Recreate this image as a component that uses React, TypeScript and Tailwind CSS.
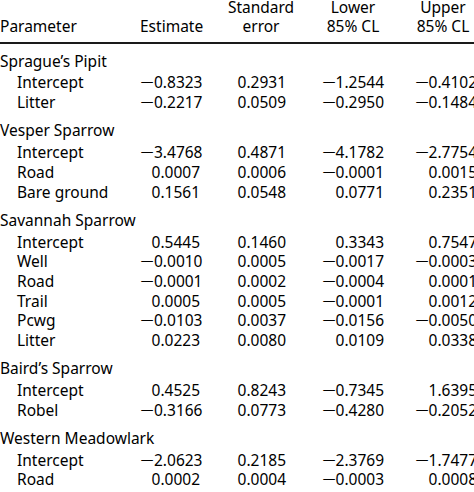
import React from "react";

type Row = [string, string, string, string, string];
type Section = { name: string; rows: Row[] };

const sections: Section[] = [
  {
    name: "Sprague\u2019s Pipit",
    rows: [
      ["Intercept", "-0.8323", "0.2931", "-1.2544", "-0.4102"],
      ["Litter", "-0.2217", "0.0509", "-0.2950", "-0.1484"],
    ],
  },
  {
    name: "Vesper Sparrow",
    rows: [
      ["Intercept", "-3.4768", "0.4871", "-4.1782", "-2.7754"],
      ["Road", "0.0007", "0.0006", "-0.0001", "0.0015"],
      ["Bare ground", "0.1561", "0.0548", "0.0771", "0.2351"],
    ],
  },
  {
    name: "Savannah Sparrow",
    rows: [
      ["Intercept", "0.5445", "0.1460", "0.3343", "0.7547"],
      ["Well", "-0.0010", "0.0005", "-0.0017", "-0.0003"],
      ["Road", "-0.0001", "0.0002", "-0.0004", "0.0001"],
      ["Trail", "0.0005", "0.0005", "-0.0001", "0.0012"],
      ["Pcwg", "-0.0103", "0.0037", "-0.0156", "-0.0050"],
      ["Litter", "0.0223", "0.0080", "0.0109", "0.0338"],
    ],
  },
  {
    name: "Baird\u2019s Sparrow",
    rows: [
      ["Intercept", "0.4525", "0.8243", "-0.7345", "1.6395"],
      ["Robel", "-0.3166", "0.0773", "-0.4280", "-0.2052"],
    ],
  },
  {
    name: "Western Meadowlark",
    rows: [
      ["Intercept", "-2.0623", "0.2185", "-2.3769", "-1.7477"],
      ["Road", "0.0002", "0.0004", "-0.0003", "0.0008"],
    ],
  },
];

function Num({ v }: { v: string }) {
  if (v.startsWith("-")) {
    return (
      <span>
        <span className="inline-block w-[14px] origin-left scale-x-[1.6] text-left">{"\u2212"}</span>
        {v.slice(1)}
      </span>
    );
  }
  return <span>{v}</span>;
}

export default function App() {
  return (
    <div
      className="w-[474px] h-[492px] overflow-hidden bg-white text-black text-[15.5px] font-normal"
      style={{ fontFamily: '"Noto Sans", "Open Sans", sans-serif' }}
    >
      <div className="w-[510px]">
        <div className="-mt-[2px] grid grid-cols-[140px_60px_122px_62px_118px] leading-[19px]">
          <div className="flex flex-col justify-end">Parameter</div>
          <div className="flex flex-col justify-end text-right">Estimate</div>
          <div className="flex flex-col items-center">
            <span>Standard</span>
            <span>error</span>
          </div>
          <div className="flex flex-col items-center whitespace-nowrap">
            <span>Lower</span>
            <span>85% CL</span>
          </div>
          <div className="flex flex-col items-center whitespace-nowrap">
            <span>Upper</span>
            <span>85% CL</span>
          </div>
        </div>
        <div className="mt-[6px] h-[1.5px] bg-[#1a1a1a]" />
        <div className="flex flex-col">
          {sections.map((s, i) => (
            <div key={s.name} className={i === 0 ? "mt-[8px]" : "mt-[8.7px]"}>
              <div className="leading-[19.6px] mb-[2.4px] whitespace-nowrap">{s.name}</div>
              {s.rows.map((r, j) => (
                <div
                  key={j}
                  className="grid grid-cols-[140px_60px_86px_98px_93px] leading-[19.6px] whitespace-nowrap"
                >
                  <div className="pl-[17px]">{r[0]}</div>
                  <div className="text-right"><Num v={r[1]} /></div>
                  <div className="text-right"><Num v={r[2]} /></div>
                  <div className="text-right"><Num v={r[3]} /></div>
                  <div className="text-right"><Num v={r[4]} /></div>
                </div>
              ))}
            </div>
          ))}
        </div>
      </div>
    </div>
  );
}
